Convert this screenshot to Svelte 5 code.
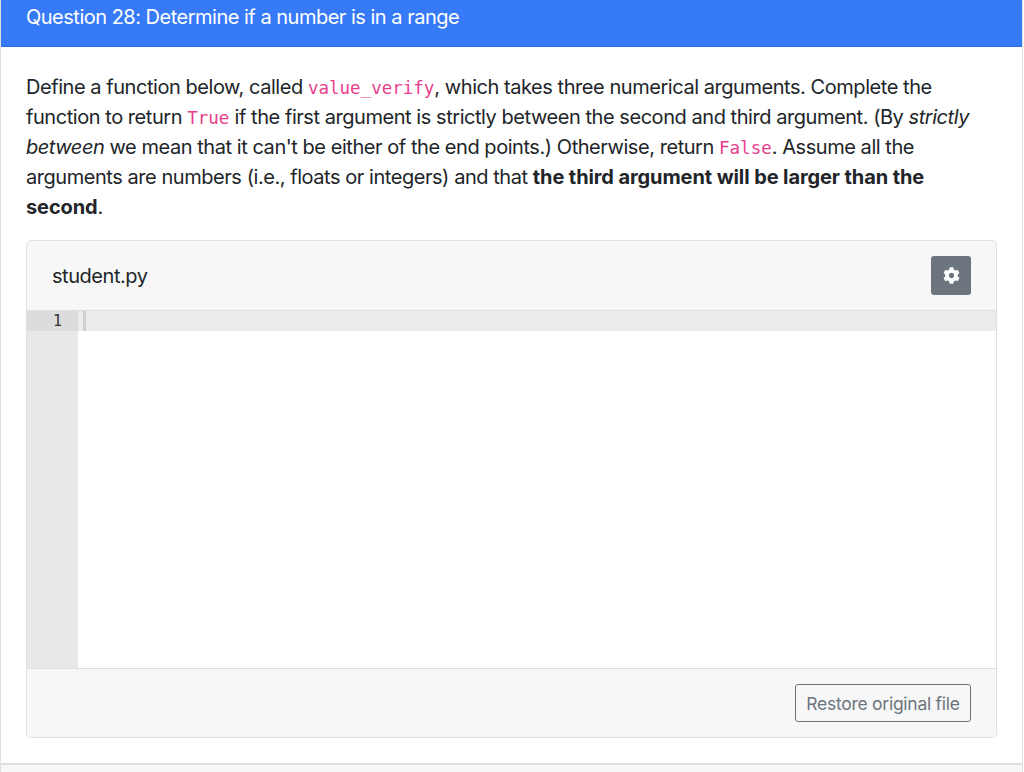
<script>
  const cog = "M487.4 315.7l-42.6-24.6c4.3-23.2 4.3-47 0-70.2l42.6-24.6c4.9-2.8 7.1-8.6 5.5-14-11.1-35.6-30-67.8-54.7-94.6-3.8-4.1-10-5.1-14.8-2.3L380.8 110c-17.9-15.4-38.5-27.3-60.8-35.1V25.8c0-5.6-3.9-10.5-9.4-11.7-36.7-8.2-74.3-7.8-109.2 0-5.5 1.2-9.4 6.1-9.4 11.7V75c-22.2 7.9-42.8 19.8-60.8 35.1L88.7 85.5c-4.9-2.8-11-1.9-14.8 2.3-24.7 26.7-43.6 58.9-54.7 94.6-1.7 5.4.6 11.2 5.5 14L67.3 221c-4.3 23.2-4.3 47 0 70.2l-42.6 24.6c-4.9 2.8-7.1 8.6-5.5 14 11.1 35.6 30 67.8 54.7 94.6 3.8 4.1 10 5.1 14.8 2.3l42.6-24.6c17.9 15.4 38.5 27.3 60.8 35.1v49.2c0 5.6 3.9 10.5 9.4 11.7 36.7 8.2 74.3 7.8 109.2 0 5.5-1.2 9.4-6.1 9.4-11.7v-49.2c22.2-7.9 42.8-19.8 60.8-35.1l42.6 24.6c4.9 2.8 11 1.9 14.8-2.3 24.7-26.7 43.6-58.9 54.7-94.6 1.5-5.5-.7-11.3-5.6-14.1zM256 336c-44.1 0-80-35.9-80-80s35.9-80 80-80 80 35.9 80 80-35.9 80-80 80z";
</script>

<div class="page">
  <section class="question">
    <h1 class="q-head">Question 28: Determine if a number is in a range</h1>
    <div class="q-body">
      <p class="prompt">Define a function below, called <code>value_verify</code>, which takes three numerical arguments. Complete the function to return <code>True</code> if the first argument is strictly between the second and third argument. (By <em>strictly between</em> we mean that it can't be either of the end points.) Otherwise, return <code>False</code>. Assume all the arguments are numbers (i.e., floats or integers) and that <strong>the third argument will be larger than the second</strong>.</p>

      <div class="file">
        <div class="file-head">
          <span class="file-name">student.py</span>
          <button class="settings" aria-label="Settings">
            <svg viewBox="0 0 512 512" width="17" height="17" aria-hidden="true"><path fill="#fff" d={cog} /></svg>
          </button>
        </div>
        <div class="editor">
          <div class="gutter"><div class="gutter-line">1</div></div>
          <div class="code"><div class="code-line"><span class="cursor"></span></div></div>
        </div>
        <div class="file-foot">
          <button class="restore">Restore original file</button>
        </div>
      </div>
    </div>
  </section>
  <div class="next"></div>
</div>

<style>
  :global(html), :global(body) { margin: 0; background: #fff; overflow: hidden; }
  .page {
    width: 1023px;
    height: 772px;
    display: flex;
    flex-direction: column;
    font-family: Inter, "Liberation Sans", sans-serif;
    color: #212529;
  }
  .question {
    border: 1px solid #dfdfdf;
    border-top: 0;
    box-sizing: border-box;
  }
  .q-head {
    margin: 0;
    height: 47px;
    box-sizing: border-box;
    padding: 5px 25px 0;
    background: #377af7;
    border-bottom: 1px solid #2f6fe6;
    color: #fff;
    font-size: 20px;
    font-weight: 400;
    line-height: 24px;
    letter-spacing: -0.5px;
  }
  .q-body { padding: 25px 25px 25px; }
  .prompt {
    margin: 0 0 18px;
    font-size: 20px;
    line-height: 30px;
    letter-spacing: -0.45px;
  }
  .prompt strong { letter-spacing: -0.1px; }
  code {
    font-family: "DejaVu Sans Mono", monospace;
    font-size: 17.5px;
    line-height: 1;
    letter-spacing: 0;
    color: #e83e8c;
  }
  .file {
    border: 1px solid #e0e0e0;
    border-radius: 5px;
    overflow: hidden;
  }
  .file-head {
    height: 70px;
    box-sizing: border-box;
    background: #f7f7f7;
    border-bottom: 1px solid #dfdfdf;
    padding: 15px 25px;
    display: flex;
    align-items: center;
    justify-content: space-between;
  }
  .file-name { font-size: 20px; letter-spacing: -0.45px; }
  .settings {
    width: 40px;
    height: 39px;
    padding: 0;
    border: 0;
    border-radius: 3px;
    background: #6c757d;
    display: flex;
    align-items: center;
    justify-content: center;
  }
  .editor {
    display: flex;
    height: 357px;
    background: #fff;
  }
  .gutter { width: 51px; background: #e8e8e8; }
  .gutter-line {
    height: 20px;
    background: #dcdcdc;
    box-sizing: border-box;
    padding-right: 16px;
    text-align: right;
    font-family: "DejaVu Sans Mono", monospace;
    font-size: 15px;
    line-height: 20px;
    color: #333;
  }
  .code { flex: 1; }
  .code-line {
    height: 20px;
    background: #ececec;
    padding-left: 5px;
    box-sizing: border-box;
  }
  .cursor { display: block; width: 3px; height: 20px; background: #cfcfcf; }
  .file-foot {
    height: 69px;
    box-sizing: border-box;
    background: #f7f7f7;
    border-top: 1px solid #dfdfdf;
    padding: 15px 25px;
    display: flex;
    justify-content: flex-end;
    align-items: center;
  }
  .restore {
    height: 38px;
    width: 176px;
    padding: 0;
    background: transparent;
    border: 1px solid #6c757d;
    border-radius: 3px;
    color: #6c757d;
    font-family: inherit;
    font-size: 17.5px;
    letter-spacing: -0.26px;
  }
  .next {
    flex: 1;
    background: #f7f7f7;
    border: 1px solid #dfdfdf;
    border-bottom: 0;
    border-top-width: 2px;
    margin-top: -1px;
  }
</style>
